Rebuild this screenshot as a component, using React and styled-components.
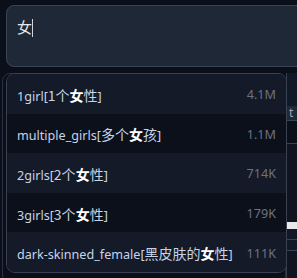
import React from "react";
import styled, { createGlobalStyle } from "styled-components";

const Global = createGlobalStyle`
    html, body {
        margin: 0;
        padding: 0;
        background: #0b0f19;
        overflow: hidden;
    }
    body {
        font-family: "Noto Sans", "Noto Sans CJK SC", sans-serif;
    }
`;

const Page = styled.div`
    position: relative;
    width: 297px;
    height: 278px;
    padding: 5px 0 0 6px;
    box-sizing: border-box;
    overflow: hidden;
`;

const Prompt = styled.div`
    width: 320px;
    height: 62px;
    box-sizing: border-box;
    background: #1f2837;
    border: 1px solid #3a4454;
    border-radius: 8px;
    padding: 10px 10px;
    font-size: 15px;
    color: #e5e7eb;
    font-family: "Noto Sans CJK SC", sans-serif;
    display: flex;
    align-items: flex-start;
`;

const Caret = styled.span`
    display: inline-block;
    width: 1px;
    height: 18px;
    margin-top: 3px;
    background: #d1d5db;
`;

const Underlay = styled.div`
    margin: 6px 0 0 -4px;
    display: flex;
    height: 210px;
`;

const UnderMain = styled.div`
    width: 282px;
    border: 1px solid #2a3140;
    border-radius: 8px;
`;

const UnderSide = styled.div`
    flex: 1;
    display: flex;
    flex-direction: column;
    border-left: 1px solid #374151;
`;

const SideStrip = styled.div`
    height: ${(p) => p.h}px;
    background: ${(p) => p.bg};
    border-bottom: ${(p) => (p.line ? "1px solid #374151" : "none")};
    color: #9ca3af;
    font-size: 12px;
    padding-left: 2px;
    line-height: 14px;
`;

const Dropdown = styled.div`
    position: absolute;
    top: 73px;
    left: 6px;
    width: 281px;
    box-sizing: border-box;
    border: 1px solid #3a4250;
    border-radius: 9px;
    overflow: hidden;
    background: #0c101b;
`;

const Row = styled.div`
    height: 39.6px;
    display: flex;
    align-items: center;
    justify-content: space-between;
    padding: 2px 10px 0 10px;
    box-sizing: border-box;
    background: ${(p) => (p.odd ? "#141a28" : "#0c101b")};
`;

const Label = styled.span`
    font-size: 12.6px;
    color: #c6d5e6;
    white-space: nowrap;
`;

const Cjk = styled.span`
    font-size: 14px;
    font-family: "Noto Sans CJK SC", sans-serif;
`;

const Bracket = styled.span`
    font-family: "Noto Sans", sans-serif;
    font-size: 12.6px;
`;

const Hit = styled.b`
    color: #ffffff;
    font-weight: 700;
`;

const Count = styled.span`
    font-size: 12.6px;
    color: #6b7280;
`;

const items = [
    ["1girl", "1个", "性", "4.1M"],
    ["multiple_girls", "多个", "孩", "1.1M"],
    ["2girls", "2个", "性", "714K"],
    ["3girls", "3个", "性", "179K"],
    ["dark-skinned_female", "黑皮肤的", "性", "111K"],
];

export default function App() {
    return (
        <Page>
            <Global />
            <Prompt>
                女<Caret />
            </Prompt>
            <Underlay>
                <UnderMain />
                <UnderSide>
                    <SideStrip h={33} bg="#111827" />
                    <SideStrip h={14} bg="#1f2937" line>t</SideStrip>
                    <SideStrip h={22} bg="#0b0f19" line />
                    <SideStrip h={78} bg="#0f1420" />
                    <SideStrip h={7} bg="#e5e7eb" />
                    <SideStrip h={10} bg="#111827" line />
                    <SideStrip h={10} bg="#111827" line />
                    <SideStrip h={28} bg="#0f1420" />
                </UnderSide>
            </Underlay>
            <Dropdown>
                {items.map(([tag, pre, post, n], i) => (
                    <Row key={tag} odd={i % 2 === 0}>
                        <Label>
                            {tag}
                            <Cjk>
                                <Bracket>[</Bracket>
                                {pre}
                                <Hit>女</Hit>
                                {post}
                                <Bracket>]</Bracket>
                            </Cjk>
                        </Label>
                        <Count>{n}</Count>
                    </Row>
                ))}
            </Dropdown>
        </Page>
    );
}
